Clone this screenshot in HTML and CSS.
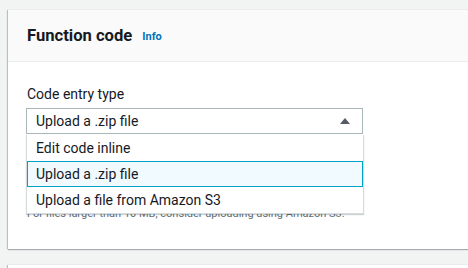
FILE: index.html
```html
<!DOCTYPE html>
<html lang="en">
<head>
  <meta charset="UTF-8">
  <title>Function code</title>
  <link rel="stylesheet" href="styles.css">
</head>
<body>
  <div class="card">
    <div class="card-header">
      <h2>Function code</h2>
      <a class="info" href="#">Info</a>
    </div>
    <div class="card-body">
      <label class="field-label">Code entry type</label>
      <div class="select-wrap">
        <div class="select">
          <span>Upload a .zip file</span>
          <span class="caret"></span>
        </div>
        <ul class="dropdown">
          <li>Edit code inline</li>
          <li class="selected">Upload a .zip file</li>
          <li>Upload a file from Amazon S3</li>
        </ul>
      </div>
      <div class="package">
        <label class="field-label">Function package</label>
        <button class="upload-btn">Upload</button>
      </div>
      <p class="hint">For files larger than 10 MB, consider uploading using Amazon S3.</p>
    </div>
  </div>
  <div class="card next"></div>
</body>
</html>
```

FILE: styles.css
```css
body {
  margin: 0;
  padding: 10px 0 0 8px;
  background: #f2f3f3;
  font-family: Roboto, sans-serif;
  color: #16191f;
  overflow: hidden;
}

.card {
  width: 520px;
  background: white;
  box-shadow: 0 1px 1px 0 rgba(0, 28, 36, 0.3), -1px 0 1px 0 rgba(0, 28, 36, 0.2);
}

.card-header {
  height: 52px;
  box-sizing: border-box;
  padding: 0 19px;
  background: #fafafa;
  border-bottom: 1px solid #eaeded;
  display: flex;
  align-items: center;
}

.card-header h2 {
  margin: 0 0 1px;
  font-size: 16.6px;
  font-weight: 700;
}

.info {
  margin-left: 10px;
  margin-top: 2px;
  font-size: 11px;
  font-weight: 700;
  color: #0073bb;
  text-decoration: none;
}

.card-body {
  padding: 22px 19px 27px;
}

.field-label {
  display: block;
  font-size: 14px;
  line-height: 20px;
  margin-bottom: 4px;
}

.select-wrap {
  position: relative;
  width: 337px;
  margin-left: -1px;
}

.select {
  height: 26px;
  box-sizing: border-box;
  border: 1px solid #aab7b8;
  padding: 0 9px;
  font-size: 14px;
  display: flex;
  align-items: center;
  justify-content: space-between;
}

.caret {
  width: 0;
  height: 0;
  border-left: 5px solid transparent;
  border-right: 5px solid transparent;
  border-bottom: 6px solid #545b64;
  margin-right: 3px;
}

.dropdown {
  position: absolute;
  top: 27px;
  left: 0;
  right: -1px;
  margin: 0;
  padding: 0;
  list-style: none;
  background: white;
  border: 1px solid #d5dbdb;
  border-top: none;
  box-shadow: 0 1px 1px rgba(0, 28, 36, 0.2);
  z-index: 10;
}

.dropdown li {
  height: 26px;
  box-sizing: border-box;
  padding: 0 9px;
  font-size: 14px;
  display: flex;
  align-items: center;
}

.dropdown li.selected {
  background: #f1faff;
  border: 1px solid #00a1c9;
  padding-left: 8px;
}

.package {
  margin-top: 18px;
}

.upload-btn {
  height: 26px;
  padding: 0 16px;
  border: 1px solid #545b64;
  background: white;
  font-family: inherit;
  font-size: 14px;
  font-weight: 700;
  color: #545b64;
}

.hint {
  margin: 4px 0 0;
  font-size: 11px;
  line-height: 16px;
  color: #687078;
}

.card.next {
  height: 40px;
  margin-top: 16px;
}
```
